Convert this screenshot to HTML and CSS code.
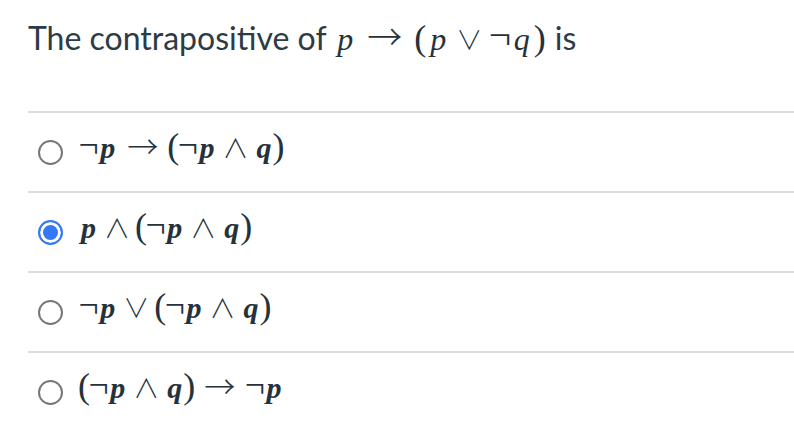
FILE: index.html
```html
<!DOCTYPE html>
<html>
<head>
<meta charset="utf-8">
<link rel="stylesheet" href="styles.css">
</head>
<body>
<div class="question">
  <div class="prompt">The contrapositive of <span class="math"><i class="v">p</i><span class="rel">→</span><span class="par">(</span><i class="v">p</i><span class="bin">∨</span><span class="op">¬</span><i class="v">q</i><span class="par">)</span></span> is</div>
  <ul class="answers">
    <li class="answer">
      <span class="radio"></span>
      <span class="math bold"><span class="op">¬</span><i class="v">p</i><span class="rel">→</span><span class="par">(</span><span class="op">¬</span><i class="v">p</i><span class="bin">∧</span><i class="v">q</i><span class="par">)</span></span>
    </li>
    <li class="answer">
      <span class="radio checked"></span>
      <span class="math bold"><i class="v">p</i><span class="bin">∧</span><span class="par">(</span><span class="op">¬</span><i class="v">p</i><span class="bin">∧</span><i class="v">q</i><span class="par">)</span></span>
    </li>
    <li class="answer">
      <span class="radio"></span>
      <span class="math bold"><span class="op">¬</span><i class="v">p</i><span class="bin">∨</span><span class="par">(</span><span class="op">¬</span><i class="v">p</i><span class="bin">∧</span><i class="v">q</i><span class="par">)</span></span>
    </li>
    <li class="answer">
      <span class="radio"></span>
      <span class="math bold"><span class="par">(</span><span class="op">¬</span><i class="v">p</i><span class="bin">∧</span><i class="v">q</i><span class="par">)</span><span class="rel">→</span><span class="op">¬</span><i class="v">p</i></span>
    </li>
  </ul>
</div>
</body>
</html>
```

FILE: styles.css
```css
html, body {
  margin: 0;
  padding: 0;
  background: #fff;
}

.question {
  padding: 17px 0 0 28px;
  font-family: Lato, "Open Sans", sans-serif;
  color: #2d3b45;
}

.prompt {
  font-size: 32px;
  line-height: 42px;
  height: 42px;
  margin-bottom: 52px;
  white-space: nowrap;
}

.math {
  font-family: "Liberation Serif", "DejaVu Serif", serif;
  font-size: 30px;
  color: #26323b;
  white-space: nowrap;
}

.math > * {
  line-height: 0;
}

.math .v {
  font-style: italic;
  padding: 0 2px;
}

.math .rel {
  font-family: "Noto Sans CJK JP", "DejaVu Sans", sans-serif;
  font-weight: 300;
  font-size: 31px;
  margin: 0 10px;
}

.math .bin {
  font-family: "Noto Sans CJK JP", "DejaVu Sans", sans-serif;
  font-weight: 300;
  font-size: 26px;
  margin: 0 6px;
}

.math .op {
  font-family: "Noto Sans CJK JP", "DejaVu Sans", sans-serif;
  font-weight: 300;
  font-size: 36px;
}

.math .par {
  font-family: "Liberation Serif", serif;
  font-size: 36px;
  margin: 0 -1px;
}

.math.bold .v {
  font-weight: bold;
}

.prompt .math {
  font-size: 32px;
}

.prompt .math .v {
  padding: 0 3px;
}

.prompt .math .rel {
  font-size: 35px;
  margin: 0 11px;
}

.prompt .math .bin {
  margin: 0 7px;
}

.prompt .math .op {
  font-size: 40px;
}

.prompt .math .par {
  margin: 0 1px;
}

.answers {
  list-style: none;
  margin: 0;
  padding: 0;
}

.answer {
  display: flex;
  align-items: center;
  gap: 16px;
  height: 78px;
  border-top: 2px solid #dcdcdc;
  padding-left: 10px;
}

.answer .math {
  line-height: 40px;
  padding-bottom: 8px;
}

.radio {
  width: 21px;
  height: 21px;
  border: 2px solid #777;
  border-radius: 50%;
  flex: none;
  box-sizing: content-box;
}

.radio.checked {
  border-color: #3478f6;
  background: #3478f6;
  box-shadow: inset 0 0 0 3px #fff;
}
```
